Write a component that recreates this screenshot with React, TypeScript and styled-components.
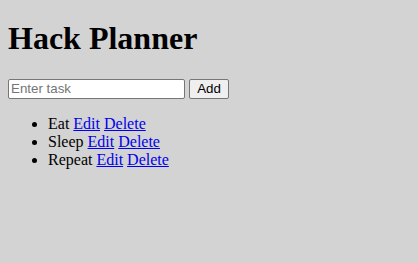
import React, { useState } from "react";
import styled, { createGlobalStyle } from "styled-components";

const Global = createGlobalStyle`
  html, body { background: #d3d3d3; }
  body { margin: 8px; font-family: "Liberation Serif", "Times New Roman", serif; font-size: 16px; color: #000; }
`;

const Title = styled.h1`
  font-size: 32px;
  font-weight: bold;
  margin: 12.4px 0 21.44px;
  line-height: normal;
`;

const Form = styled.div`
  display: flex;
  align-items: center;
  gap: 4px;
`;

const TaskInput = styled.input`
  box-sizing: border-box;
  width: 177px;
  height: 20px;
  padding: 1px 2px;
  border: 1px solid #767676;
  border-radius: 2px;
  background: #fff;
  font-family: "Liberation Sans", Arial, sans-serif;
  font-size: 13.33px;
  &::placeholder { color: #757575; }
`;

const AddButton = styled.button`
  box-sizing: border-box;
  height: 20px;
  padding: 1px 6px;
  border: 1px solid #767676;
  border-radius: 2px;
  background: #efefef;
  color: #000;
  font-family: "Liberation Sans", Arial, sans-serif;
  font-size: 13.33px;
  width: 40px;
`;

const List = styled.ul`
  margin: 16px 0;
  padding-left: 40px;
  line-height: normal;
`;

const Link = styled.a`
  color: #0000ee;
  text-decoration: underline;
`;

export default function App() {
  const [tasks] = useState(["Eat", "Sleep", "Repeat"]);
  return (
    <>
      <Global />
      <Title>Hack Planner</Title>
      <Form>
        <TaskInput placeholder="Enter task" />
        <AddButton>Add</AddButton>
      </Form>
      <List>
        {tasks.map((t) => (
          <li key={t}>
            {t} <Link href="#">Edit</Link> <Link href="#">Delete</Link>
          </li>
        ))}
      </List>
    </>
  );
}
